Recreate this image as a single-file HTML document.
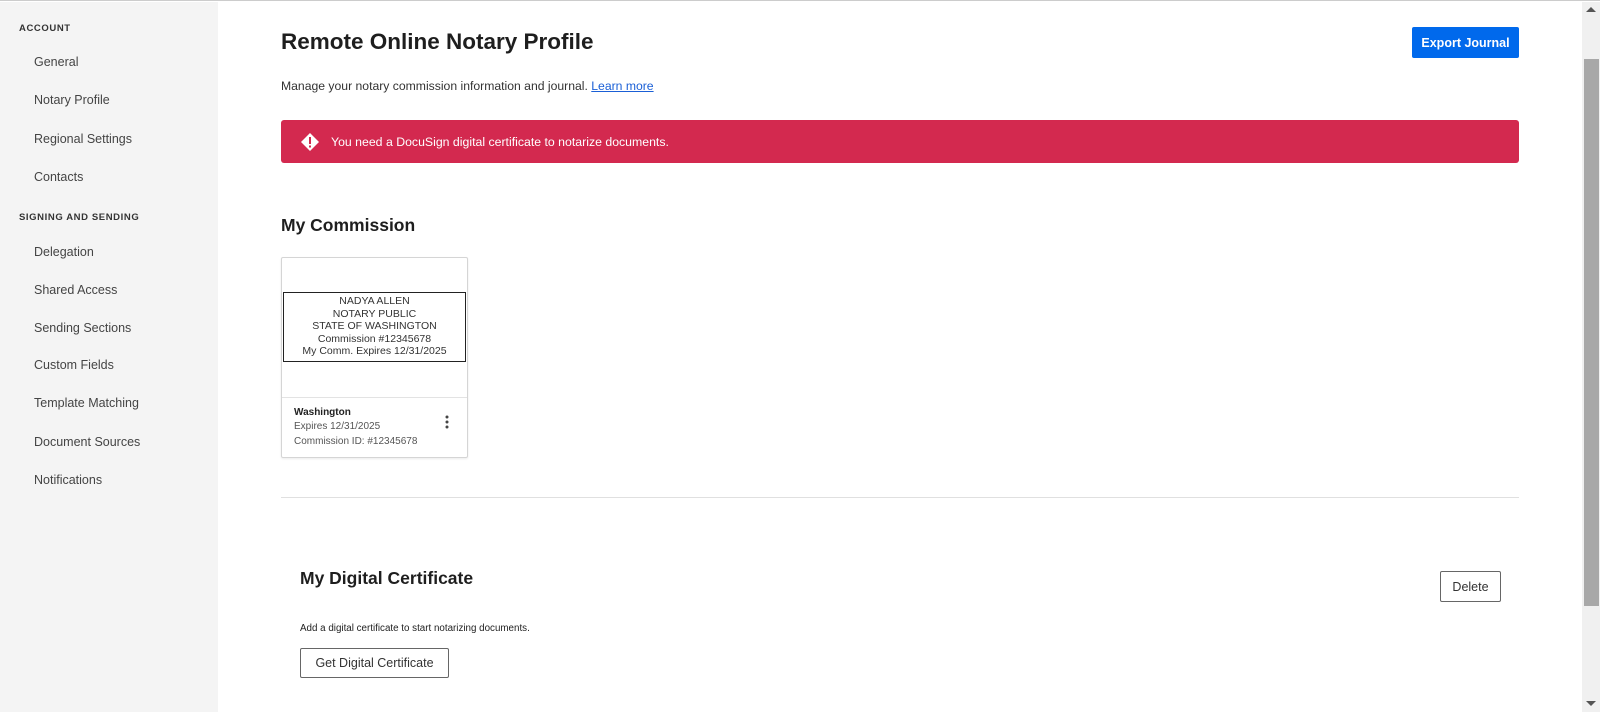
<!DOCTYPE html>
<html><head><style>
*{margin:0;padding:0;box-sizing:border-box}
body{width:1600px;height:711px;overflow:hidden;background:#fff;font-family:"Liberation Sans",sans-serif;color:#1e1e1e;position:relative;border-top:1px solid #ccc}
.a{position:absolute;white-space:nowrap}
.side{position:absolute;left:0;top:1px;width:218px;height:710px;background:#f4f4f4}
.hd{font-size:9.5px;font-weight:bold;letter-spacing:0.6px;color:#333;left:19px}
.nav{font-size:12.5px;color:#444;left:34px}
.btn{position:absolute;border:1px solid #666;background:#fff;font-size:12.5px;color:#333;display:flex;align-items:center;justify-content:center;border-radius:2px}
</style></head><body>
<div class="side"></div>
<div class="a hd" style="top:22px">ACCOUNT</div>
<div class="a nav" style="top:54px">General</div>
<div class="a nav" style="top:92px">Notary Profile</div>
<div class="a nav" style="top:131px">Regional Settings</div>
<div class="a nav" style="top:169px">Contacts</div>
<div class="a hd" style="top:211px">SIGNING AND SENDING</div>
<div class="a nav" style="top:244px">Delegation</div>
<div class="a nav" style="top:282px">Shared Access</div>
<div class="a nav" style="top:320px">Sending Sections</div>
<div class="a nav" style="top:357px">Custom Fields</div>
<div class="a nav" style="top:395px">Template Matching</div>
<div class="a nav" style="top:434px">Document Sources</div>
<div class="a nav" style="top:472px">Notifications</div>

<div class="a" style="left:281px;top:28px;font-size:22.5px;font-weight:bold;color:#1e1e1e">Remote Online Notary Profile</div>
<div class="a" style="left:281px;top:78px;font-size:12.2px;color:#333">Manage your notary commission information and journal. <span style="color:#1a5fd6;text-decoration:underline">Learn more</span></div>
<div class="btn" style="left:1412px;top:26px;width:107px;height:31px;background:#0069ec;border:none;color:#fff;font-size:12.5px;font-weight:bold">Export Journal</div>

<div class="a" style="left:281px;top:119px;width:1238px;height:43px;background:#d3294f;border-radius:3px"></div>
<svg class="a" style="left:300px;top:131px" width="20" height="20" viewBox="0 0 20 20"><path d="M10 1 L19 10 L10 19 L1 10Z" fill="#fff"/><rect x="9" y="5" width="2" height="7" fill="#d3294f"/><rect x="9" y="13.5" width="2" height="2" fill="#d3294f"/></svg>
<div class="a" style="left:331px;top:134px;font-size:12.3px;color:#fff">You need a DocuSign digital certificate to notarize documents.</div>

<div class="a" style="left:281px;top:214px;font-size:17.5px;font-weight:bold">My Commission</div>
<div class="a" style="left:281px;top:256px;width:187px;height:201px;border:1px solid #d5d5d5;border-radius:2px;box-shadow:0 1px 2px rgba(0,0,0,.08)"></div>
<div class="a" style="left:283px;top:291px;width:183px;height:70px;border:1.5px solid #222;text-align:center;font-size:10.5px;line-height:12.6px;color:#333;padding-top:2px">NADYA ALLEN<br>NOTARY PUBLIC<br>STATE OF WASHINGTON<br>Commission #12345678<br>My Comm. Expires 12/31/2025</div>
<div class="a" style="left:282px;top:396px;width:185px;height:1px;background:#e3e3e3"></div>
<div class="a" style="left:294px;top:406px;font-size:10px;font-weight:bold;color:#222">Washington</div>
<div class="a" style="left:294px;top:420px;font-size:10px;color:#555">Expires 12/31/2025</div>
<div class="a" style="left:294px;top:435px;font-size:10px;color:#555">Commission ID: #12345678</div>
<svg class="a" style="left:444px;top:413px" width="6" height="16"><circle cx="3" cy="3" r="1.5" fill="#444"/><circle cx="3" cy="8" r="1.5" fill="#444"/><circle cx="3" cy="13" r="1.5" fill="#444"/></svg>

<div class="a" style="left:281px;top:496px;width:1238px;height:1px;background:#e0e0e0"></div>

<div class="a" style="left:300px;top:567px;font-size:17.5px;font-weight:bold">My Digital Certificate</div>
<div class="btn" style="left:1440px;top:570px;width:61px;height:31px">Delete</div>
<div class="a" style="left:300px;top:622px;font-size:9.8px;color:#222">Add a digital certificate to start notarizing documents.</div>
<div class="btn" style="left:300px;top:647px;width:149px;height:30px">Get Digital Certificate</div>

<div class="a" style="left:1582px;top:1px;width:18px;height:710px;background:#f0f0f0"></div>
<div class="a" style="left:1584px;top:58px;width:15px;height:547px;background:#a8a8a8"></div>
<svg class="a" style="left:1586px;top:6px" width="10" height="6"><path d="M0 5 L5 0 L10 5Z" fill="#555"/></svg>
<svg class="a" style="left:1586px;top:700px" width="10" height="6"><path d="M0 0 L10 0 L5 5Z" fill="#555"/></svg>
</body></html>
